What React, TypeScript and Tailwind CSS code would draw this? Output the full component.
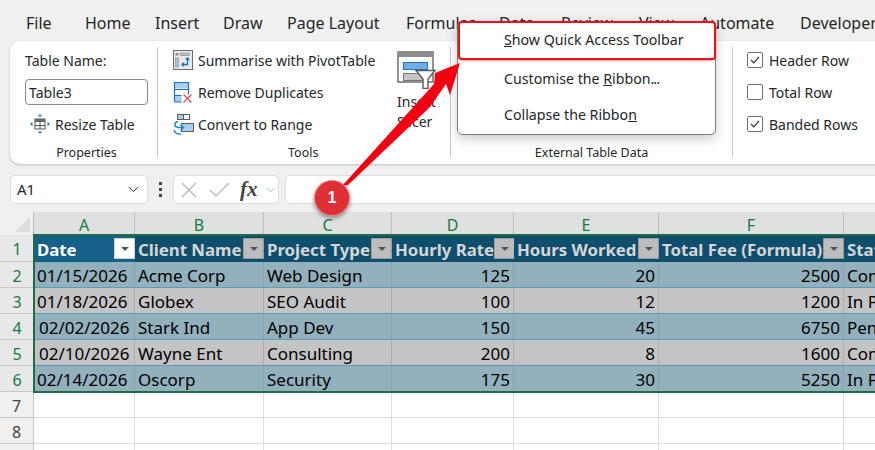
import type { ReactNode } from 'react';
import { ChevronDown } from 'lucide-react';

const tabs = [
  { label: 'File', cls: 'w-[59px]' },
  { label: 'Home', cls: 'w-[70px]' },
  { label: 'Insert', cls: 'w-[68px]' },
  { label: 'Draw', cls: 'w-[64px]' },
  { label: 'Page Layout', cls: 'w-[119px]' },
  { label: 'Formulas', cls: 'w-[93px]' },
  { label: 'Data', cls: 'w-[62px]' },
  { label: 'Review', cls: 'w-[78px]' },
  { label: 'View', cls: 'w-[61px]' },
  { label: 'Automate', cls: 'w-[100px]' },
  { label: 'Developer', cls: 'w-[100px]' },
];

const columns = ['A', 'B', 'C', 'D', 'E', 'F', ''];
const colWidths = ['w-[101px]', 'w-[129px]', 'w-[128px]', 'w-[122px]', 'w-[145px]', 'w-[185px]', 'w-[60px]'];

const headers = ['Date', 'Client Name', 'Project Type', 'Hourly Rate', 'Hours Worked', 'Total Fee (Formula)', 'Status'];

const rows = [
  ['01/15/2026', 'Acme Corp', 'Web Design', '125', '20', '2500', 'Complete'],
  ['01/18/2026', 'Globex', 'SEO Audit', '100', '12', '1200', 'In Progress'],
  ['02/02/2026', 'Stark Ind', 'App Dev', '150', '45', '6750', 'Pending'],
  ['02/10/2026', 'Wayne Ent', 'Consulting', '200', '8', '1600', 'Complete'],
  ['02/14/2026', 'Oscorp', 'Security', '175', '30', '5250', 'In Progress'],
];

function PivotIcon() {
  return (
    <svg width="20" height="20" viewBox="0 0 20 20" fill="none">
      <rect x="0.5" y="0.5" width="19" height="19" fill="#e8e8e8" stroke="#6b6b6b" />
      <rect x="2.5" y="3" width="3" height="2.5" fill="#8a8a8a" />
      <rect x="7.5" y="3" width="9" height="2.5" fill="#bdbdbd" stroke="#7a7a7a" strokeWidth="0.5" />
      <rect x="2.5" y="8" width="3" height="9" fill="#bdbdbd" stroke="#7a7a7a" strokeWidth="0.5" />
      <path d="M14.5 8v6.5H9M12.8 9.8l1.7-1.8 1.7 1.8M10.8 12.8 9 14.5l1.8 1.7" stroke="#1b75bb" strokeWidth="1.3" />
    </svg>
  );
}

function DuplicatesIcon() {
  return (
    <svg width="20" height="21" viewBox="0 0 20 21" fill="none">
      <rect x="1.5" y="0.5" width="14" height="6" fill="#a9cdea" />
      <rect x="1.5" y="8" width="14" height="5" fill="#fff" />
      <rect x="1.5" y="14" width="7" height="6" fill="#a9cdea" />
      <path d="M1.5 20V.5h14v12M1.5 7.5h14M1.5 13.5h7M1.5 20h7" stroke="#1b75bb" strokeWidth="1.2" />
      <path d="m10.5 12.5 8 8M18.5 12.5l-8 8" stroke="#e4474d" strokeWidth="1.2" />
    </svg>
  );
}

function ConvertIcon() {
  return (
    <svg width="21" height="21" viewBox="0 0 21 21" fill="none">
      <rect x="4.5" y="0.5" width="6" height="5" fill="#a9cdea" stroke="#5c5c5c" />
      <rect x="10.5" y="0.5" width="6" height="5" fill="#fff" stroke="#5c5c5c" />
      <rect x="8.5" y="9.5" width="12" height="8" fill="#a9cdea" stroke="#5c5c5c" />
      <path d="M5 7.5C1 8 .5 13 5 13.5h5M7.5 10.5 10.5 13.5 7.5 16.5" stroke="#1b8bd0" strokeWidth="1.4" />
      <path d="M1 16c1 3 4 4.5 7 4" stroke="#1b8bd0" strokeWidth="1.4" />
    </svg>
  );
}

function ResizeIcon() {
  return (
    <svg width="20" height="20" viewBox="0 0 20 20" fill="none">
      <rect x="5" y="5" width="10" height="10" fill="#fff" stroke="#555" />
      <rect x="5" y="5" width="10" height="3" fill="#666" />
      <path d="M5 11.5h10M10 8v7" stroke="#555" />
      <path d="M10 0l2.2 2.5H7.8zM10 20l2.2-2.5H7.8zM0 10l2.5-2.2v4.4zM20 10l-2.5-2.2v4.4z" fill="#1b75bb" />
    </svg>
  );
}

function SlicerIcon() {
  return (
    <svg width="39" height="38" viewBox="0 0 39 38" fill="none">
      <rect x="1" y="1" width="35" height="30" fill="#fff" stroke="#6e6e6e" strokeWidth="1.5" />
      <rect x="1" y="1" width="35" height="5" fill="#8c8c8c" />
      <rect x="6.5" y="11.5" width="24" height="7" fill="#6fb0e4" stroke="#1b75bb" />
      <rect x="6.5" y="22.5" width="19" height="7" fill="#c4c4c4" stroke="#777" />
      <path d="M19 19.5h19l-7 8.5v9.5h-5V28z" fill="#fff" stroke="#5c5c5c" strokeWidth="1.4" />
    </svg>
  );
}

function Check({ checked }: { checked: boolean }) {
  return (
    <div className="w-[16px] h-[16px] rounded-[2px] border border-[#6f6f6f] bg-white flex items-center justify-center">
      {checked && (
        <svg width="10" height="8" viewBox="0 0 10 8" fill="none">
          <path d="M1 4l2.8 2.8L9 1" stroke="#333" strokeWidth="1.2" />
        </svg>
      )}
    </div>
  );
}

function ToolRow({ icon, label }: { icon: ReactNode; label: string }) {
  return (
    <div className="h-[32px] flex items-center">
      <div className="w-[25px] flex justify-start">{icon}</div>
      <span>{label}</span>
    </div>
  );
}

function FilterButton({ active }: { active?: boolean }) {
  return (
    <div className={`w-[21px] h-[21px] shrink-0 flex items-center justify-center border ${active ? 'bg-white border-[#d0d0d0]' : 'bg-[#bdbdbd] border-[#9a9a9a]'}`}>
      <div className="w-0 h-0 border-l-[4px] border-r-[4px] border-t-[4px] border-l-transparent border-r-transparent border-t-[#555]" />
    </div>
  );
}

export default function App() {
  return (
    <div className="relative w-[875px] h-[450px] overflow-hidden bg-[#f0f0f0] text-[#262626] font-['Noto_Sans','Open_Sans',sans-serif]">
      {/* tabs */}
      <div className="h-[41px] pl-[26px] pt-[5px] flex items-center text-[16px] whitespace-nowrap">
        {tabs.map((tab) => (
          <div key={tab.label} className={`${tab.cls} shrink-0`}>{tab.label}</div>
        ))}
      </div>

      {/* ribbon */}
      <div className="ml-[10px] h-[123px] w-[880px] bg-white rounded-l-[10px] shadow-[0_1px_3px_rgba(0,0,0,0.2)] flex text-[14px] pt-[6px] pb-[7px]">
        <div className="w-[148px] shrink-0 pl-[15px] pr-[9px] flex flex-col border-r border-[#c8c8c8]">
          <div className="h-[26px] flex items-center">Table Name:</div>
          <div className="mt-[6px] w-[123px] h-[26px] rounded-[4px] border border-[#8a8a8a] pl-[3px] flex items-center">Table3</div>
          <div className="h-[38px] flex items-center pl-[5px] gap-[5px]">
            <ResizeIcon />
            <span>Resize Table</span>
          </div>
          <div className="mt-auto -mb-[1px] h-[10px] leading-[10px] text-center text-[12.5px]">Properties</div>
        </div>

        <div className="w-[293px] shrink-0 pl-[15px] flex flex-col border-r border-[#c8c8c8]">
          <div className="flex">
            <div className="w-[224px] -mt-[3px]">
              <ToolRow icon={<PivotIcon />} label="Summarise with PivotTable" />
              <ToolRow icon={<DuplicatesIcon />} label="Remove Duplicates" />
              <ToolRow icon={<ConvertIcon />} label="Convert to Range" />
            </div>
            <div className="pt-[4px] flex flex-col items-start leading-[20px]">
              <SlicerIcon />
              <div className="mt-[3px]">Insert</div>
              <div>Slicer</div>
            </div>
          </div>
          <div className="mt-auto -mb-[1px] h-[10px] leading-[10px] text-[12.5px] pl-[115px]">Tools</div>
        </div>

        <div className="w-[282px] shrink-0 flex flex-col border-r border-[#c8c8c8]">
          <div className="mt-auto -mb-[1px] h-[10px] leading-[10px] text-[12.5px] text-center">External Table Data</div>
        </div>

        <div className="pl-[14px] -mt-[3px]">
          {['Header Row', 'Total Row', 'Banded Rows'].map((label, i) => (
            <div key={label} className="h-[32px] flex items-center gap-[6px]">
              <Check checked={i !== 1} />
              <span>{label}</span>
            </div>
          ))}
        </div>
      </div>

      {/* formula bar */}
      <div className="mt-[11px] h-[29px] pl-[10px] flex items-center">
        <div className="w-[138px] shrink-0 h-[29px] bg-white rounded-[5px] border border-[#dcdcdc] pl-[6px] pr-[5px] flex items-center justify-between text-[15px]">
          <span>A1</span>
          <ChevronDown size={17} strokeWidth={1.4} />
        </div>
        <div className="w-[25px] shrink-0 flex flex-col items-center gap-[3px]">
          <div className="w-[3px] h-[3px] bg-[#444]" />
          <div className="w-[3px] h-[3px] bg-[#444]" />
          <div className="w-[3px] h-[3px] bg-[#444]" />
        </div>
        <div className="w-[106px] shrink-0 h-[29px] bg-white rounded-[5px] border border-[#dcdcdc] pl-[7px] flex items-center">
          <svg width="16" height="16" viewBox="0 0 16 16" fill="none"><path d="M1 1l14 14M15 1L1 15" stroke="#b5b5b5" strokeWidth="1.2" /></svg>
          <svg className="ml-[12px]" width="21" height="15" viewBox="0 0 21 15" fill="none"><path d="M1 8l6 6L20 1" stroke="#b5b5b5" strokeWidth="1.2" /></svg>
          <span className="ml-[10px] font-['Liberation_Serif',serif] italic font-bold text-[21px] leading-none text-[#444]">fx</span>
          <ChevronDown size={14} strokeWidth={1.2} className="ml-[6px] text-[#9a9a9a]" />
        </div>
        <div className="ml-[6px] flex-1 h-[29px] bg-white rounded-l-[5px] border border-[#dcdcdc] border-r-0" />
      </div>

      {/* sheet */}
      <div className="mt-[8px] text-black">
        <div className="flex h-[23px] bg-[#e0e0e0]">
          <div className="w-[34px] shrink-0 bg-[#f0f0f0] border-r border-[#bdbdbd] flex items-end justify-end pr-[3px] pb-[3px]">
            <div className="w-0 h-0 border-l-[15px] border-b-[15px] border-l-transparent border-b-[#dcdcdc]" />
          </div>
          {columns.map((col, i) => (
            <div key={i} className={`${colWidths[i]} shrink-0 border-r border-[#bdbdbd] flex items-center justify-center pt-[2px] text-[16px] text-[#107c41]`}>{col}</div>
          ))}
        </div>

        <div className="flex h-[27px]">
          <div className="w-[34px] shrink-0 pt-[2px] bg-[#e8e8e8] border-b border-[#c8c8c8] flex items-center justify-center text-[16px] text-[#107c41]">1</div>
          {headers.map((h, i) => (
            <div key={h} className={`${colWidths[i]} shrink-0 pl-[3px] flex items-center justify-between overflow-hidden whitespace-nowrap font-bold text-[16.8px] ${i === 0 ? 'bg-[#15618a] text-white' : 'bg-[#104e6d] text-[#d6d6d6]'}`}>
              <span className="pt-[2px]">{h}</span>
              {i < 6 && <FilterButton active={i === 0} />}
            </div>
          ))}
        </div>

        {rows.map((row, r) => (
          <div key={r} className="flex h-[26px] text-[17px]">
            <div className="w-[34px] shrink-0 pt-[2px] bg-[#e8e8e8] border-b border-[#c8c8c8] flex items-center justify-center text-[16px] text-[#107c41]">{r + 2}</div>
            {row.map((cell, i) => (
              <div
                key={i}
                className={`${colWidths[i]} shrink-0 pt-[2px] flex items-center overflow-hidden whitespace-nowrap border-b border-b-[#5b9cbd] border-r ${r % 2 === 0 ? 'bg-[#93b0bd] border-r-[#85a3b1]' : 'bg-[#c4c4c4] border-r-[#adadad]'} ${i >= 3 && i <= 5 ? 'justify-end pr-[3px]' : i === 0 ? (r === 2 || r === 3 ? 'pl-[5px]' : 'pl-[3px]') : 'pl-[3px]'}`}
              >
                {cell}
              </div>
            ))}
          </div>
        ))}

        {[7, 8, 9].map((n) => (
          <div key={n} className="flex h-[26px]">
            <div className="w-[34px] shrink-0 pt-[2px] bg-[#f0f0f0] border-r border-b border-[#c8c8c8] flex items-center justify-center text-[16px] text-[#444]">{n}</div>
            {colWidths.map((w, i) => (
              <div key={i} className={`${w} shrink-0 bg-white border-r border-b border-[#dcdcdc]`} />
            ))}
          </div>
        ))}
      </div>

      {/* table selection */}
      <div className="absolute left-[33px] top-[234px] w-[850px] h-[159px] border-2 border-[#1e6b45] pointer-events-none" />

      {/* context menu */}
      <div className="absolute left-[457px] top-[21px] w-[259px] h-[114px] bg-white rounded-[5px] border border-[#7a7a7a] shadow-[0_4px_12px_rgba(0,0,0,0.2)] text-[14.2px] pl-[46px]">
        <div className="h-[36px] flex items-center"><span><u>S</u>how Quick Access Toolbar</span></div>
        <div className="mt-[3px] h-[36px] flex items-center"><span>Customise the <u>R</u>ibbon<span className="tracking-[-1px]">...</span></span></div>
        <div className="h-[36px] flex items-center"><span>Collapse the Ribbo<u>n</u></span></div>
      </div>
      <div className="absolute left-[458px] top-[21px] w-[258px] h-[39px] rounded-[4px] border-2 border-[#e8121f] pointer-events-none shadow-[0_1px_2px_rgba(180,0,0,0.4)]" />

      {/* arrow */}
      <svg className="absolute left-0 top-0 pointer-events-none" width="875" height="450" viewBox="0 0 875 450" fill="none">
        <path d="M460 63 L435 73 L434 84 L342 186 L348 185 L430 107 L446 84 L450 95 Z" fill="#f4000e" />
      </svg>

      {/* step badge */}
      <div className="absolute left-[314px] top-[180px] w-[36px] h-[36px] rounded-full bg-[#e02f35] border border-[#f2898c] shadow-[0_2px_4px_rgba(0,0,0,0.4)] flex items-center justify-center text-white font-bold text-[16px] font-['Liberation_Sans',sans-serif]">
        1
      </div>
    </div>
  );
}
